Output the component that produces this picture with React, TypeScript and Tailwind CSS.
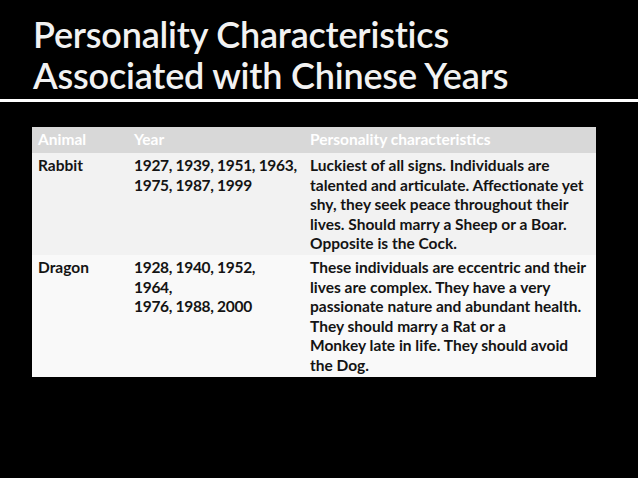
import React from "react";

const rows = [
  {
    animal: "Rabbit",
    years: ["1927, 1939, 1951, 1963,", "1975, 1987, 1999"],
    lines: [
      "Luckiest of all signs. Individuals are",
      "talented and articulate. Affectionate yet",
      "shy, they seek peace throughout their",
      "lives. Should marry a Sheep or a Boar.",
      "Opposite is the Cock.",
    ],
    bg: "bg-[#f2f2f2]",
  },
  {
    animal: "Dragon",
    years: ["1928, 1940, 1952,", "1964,", "1976, 1988, 2000"],
    lines: [
      "These individuals are eccentric and their",
      "lives are complex. They have a very",
      "passionate nature and abundant health.",
      "They should marry a Rat or a",
      "Monkey late in life. They should avoid",
      "the Dog.",
    ],
    bg: "bg-[#f9f9f9]",
  },
];

export default function App() {
  return (
    <div className="w-[638px] h-[478px] bg-black overflow-hidden font-['Lato','Open_Sans',sans-serif]">
      <div className="pl-[33px] pt-[14px] h-[99px]">
        <h1 className="text-[36px] leading-[41px] font-semibold text-[#f2f2f2] tracking-[-0.2px] [text-shadow:2px_2px_3px_rgba(0,0,0,0.8)]">
          Personality Characteristics
          <br />
          Associated with Chinese Years
        </h1>
      </div>
      <div className="h-[3px] bg-white" />
      <div className="pt-[25px] pl-[32px]">
        <div className="w-[564px] text-[15.5px] leading-[19.6px] font-bold text-[#141414]">
          <div className="flex bg-[#d8d8d8] text-white h-[26px] items-center">
            <div className="w-[96px] pl-[6px]">Animal</div>
            <div className="w-[176px] pl-[6px]">Year</div>
            <div className="flex-1 pl-[6px]">Personality characteristics</div>
          </div>
          {rows.map((r) => (
            <div key={r.animal} className={`flex ${r.bg} pt-[3px] pb-[1px]`}>
              <div className="w-[96px] pl-[6px]">{r.animal}</div>
              <div className="w-[176px] pl-[6px] tracking-[-0.3px]">
                {r.years.map((y) => (
                  <div key={y}>{y}</div>
                ))}
              </div>
              <div className="flex-1 pl-[6px] whitespace-nowrap">
                {r.lines.map((l) => (
                  <div key={l}>{l}</div>
                ))}
              </div>
            </div>
          ))}
        </div>
      </div>
    </div>
  );
}
